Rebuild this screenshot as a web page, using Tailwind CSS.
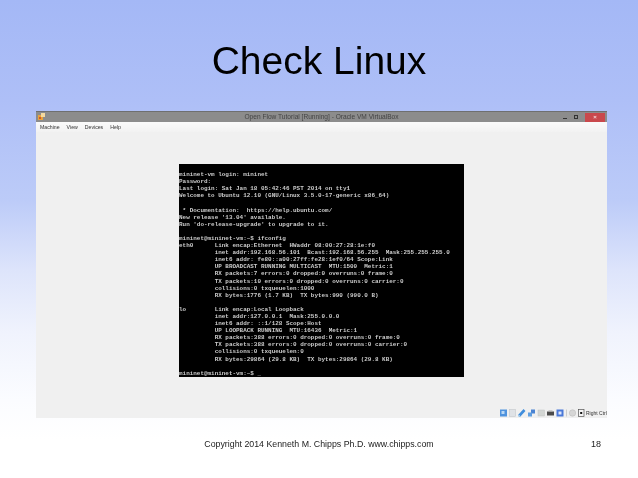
<!DOCTYPE html>
<html lang="en">
<head>
  <meta charset="UTF-8" />
  <title>Check Linux</title>
  <script src="https://cdn.jsdelivr.net/npm/@tailwindcss/browser@4"></script>
</head>
<body class="w-[638px] h-[478px] overflow-hidden bg-[linear-gradient(#a4b8f6_0,#aebff7_100px,#bccbf8_200px,#dde4fb_270px,#f0f3fd_333px,#fbfcff_400px,#fff_440px)] font-['Liberation_Sans',sans-serif] text-black">
  <div class="flex flex-col h-full blur-[0.4px]">
    <!-- Slide title -->
    <h1 class="h-[111px] pt-[38px] text-center text-[39px] leading-[46px]">Check Linux</h1>

    <!-- VirtualBox window -->
    <div class="flex flex-col ml-[36px] w-[571px] h-[307px] bg-[#f0f0f0]">
      <div class="flex items-center h-[11px] bg-[#8c8c8c] border-t border-[#6f6f6f]">
        <div class="flex-1">
          <svg class="ml-[2px] w-[7px] h-[8px]" viewBox="0 0 7 8">
            <rect x="0" y="2" width="5" height="5" fill="#e8a33c" />
            <rect x="3" y="0" width="4" height="4" fill="#f4d9a0" />
            <rect x="1" y="4" width="2" height="2" fill="#d2592a" />
          </svg>
        </div>
        <div class="text-center text-[6.6px] leading-[10px] text-[#444]">Open Flow Tutorial [Running] - Oracle VM VirtualBox</div>
        <div class="flex flex-1 items-center justify-end">
          <div class="w-[4px] h-[1px] mt-[2px] bg-[#333]"></div>
          <div class="w-[4px] h-[4px] ml-[7px] mr-[7px] border border-[#333]"></div>
          <div class="flex items-center justify-center w-[20px] h-[9px] mr-[2px] bg-[#c9484c] text-[6px] leading-none font-bold text-[#f6dcdc]">×</div>
        </div>
      </div>
      <div class="flex items-center gap-[7px] h-[10px] pl-[4px] bg-linear-to-b from-[#fafafa] to-[#f2f2f2] text-[5.2px] leading-[10px] text-[#333]">
        <span>Machine</span><span>View</span><span>Devices</span><span>Help</span>
      </div>
      <div class="flex justify-center pt-[32px]">
        <pre class="w-[285px] h-[213px] bg-black font-['Liberation_Mono',monospace] font-bold text-[5.94px] leading-[7.1px] text-[#cccccc]">

mininet-vm login: mininet
Password:
Last login: Sat Jan 18 05:42:46 PST 2014 on tty1
Welcome to Ubuntu 12.10 (GNU/Linux 3.5.0-17-generic x86_64)

 * Documentation:  https://help.ubuntu.com/
New release '13.04' available.
Run 'do-release-upgrade' to upgrade to it.

mininet@mininet-vm:~$ ifconfig
eth0      Link encap:Ethernet  HWaddr 08:00:27:28:1e:f0
          inet addr:192.168.56.101  Bcast:192.168.56.255  Mask:255.255.255.0
          inet6 addr: fe80::a00:27ff:fe28:1ef0/64 Scope:Link
          UP BROADCAST RUNNING MULTICAST  MTU:1500  Metric:1
          RX packets:7 errors:0 dropped:0 overruns:0 frame:0
          TX packets:10 errors:0 dropped:0 overruns:0 carrier:0
          collisions:0 txqueuelen:1000
          RX bytes:1776 (1.7 KB)  TX bytes:990 (990.0 B)

lo        Link encap:Local Loopback
          inet addr:127.0.0.1  Mask:255.0.0.0
          inet6 addr: ::1/128 Scope:Host
          UP LOOPBACK RUNNING  MTU:16436  Metric:1
          RX packets:388 errors:0 dropped:0 overruns:0 frame:0
          TX packets:388 errors:0 dropped:0 overruns:0 carrier:0
          collisions:0 txqueuelen:0
          RX bytes:29864 (29.8 KB)  TX bytes:29864 (29.8 KB)

mininet@mininet-vm:~$ _</pre>
      </div>
      <!-- Status bar icons -->
      <div class="flex items-center justify-end mt-auto mb-[1px] h-[8px] pr-[1px]">
        <svg class="w-[106px] h-[8px]" viewBox="0 0 106 8">
          <rect x="0" y="0.5" width="7" height="7" fill="#4f93de" />
          <rect x="1.5" y="2" width="3" height="3" fill="#b9d8f4" />
          <rect x="9.5" y="0.5" width="6" height="7" fill="#dfe2e6" stroke="#c4c8cc" stroke-width="0.6" />
          <path d="M19 7 L24.5 1" stroke="#3f8ddc" stroke-width="2.6" />
          <rect x="18" y="6" width="2" height="1.5" fill="#9cc6ea" />
          <rect x="31" y="0.5" width="4" height="4" fill="#4a83d2" />
          <rect x="28" y="3.5" width="4" height="4" fill="#5f9ee0" />
          <rect x="38" y="1" width="6.5" height="6" fill="#d3d6d4" stroke="#c0c3c1" stroke-width="0.5" />
          <rect x="47" y="2.5" width="7" height="4" fill="#4a4a4a" />
          <rect x="48.5" y="1.5" width="4" height="1.5" fill="#a5a5a5" />
          <rect x="56.5" y="0.5" width="7" height="7" fill="#4a78d8" />
          <rect x="58.5" y="2.5" width="3" height="3" fill="#dfe8fb" />
          <rect x="66" y="0.5" width="0.8" height="7" fill="#c4c4c4" />
          <circle cx="72.5" cy="4" r="3.2" fill="#d6d6d6" stroke="#bdbdbd" stroke-width="0.6" />
          <rect x="78.5" y="0.5" width="5.5" height="7" fill="#f4f4f4" stroke="#555" stroke-width="0.7" />
          <rect x="80.2" y="3" width="2" height="2" fill="#111" />
        </svg>
        <span class="ml-[-20px] w-[20px] text-[5px] leading-none whitespace-nowrap text-[#333]">Right Ctrl</span>
      </div>
    </div>

    <!-- Footer -->
    <div class="relative mt-[20px] text-[8.8px] leading-[13px] text-[#222]">
      <p class="text-center">Copyright 2014 Kenneth M. Chipps Ph.D. www.chipps.com</p>
      <span class="absolute left-[591px] top-0 text-[9px]">18</span>
    </div>
  </div>
</body>
</html>
